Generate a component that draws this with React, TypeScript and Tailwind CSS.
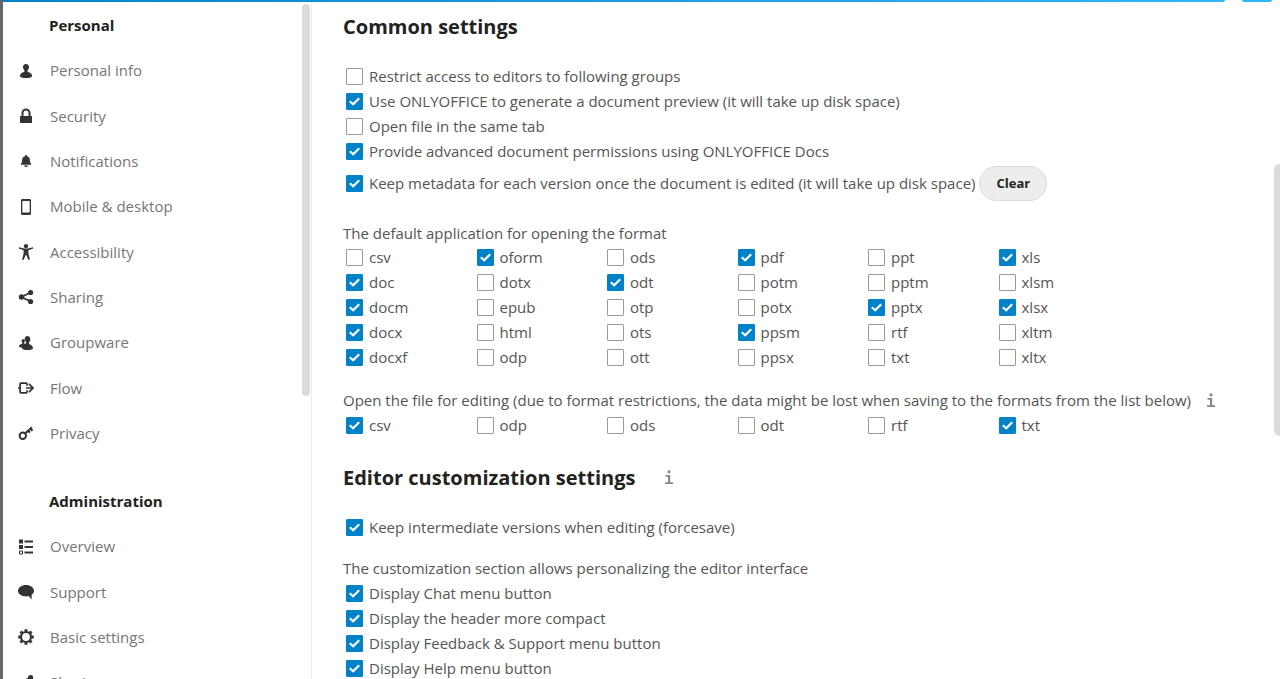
import React from "react";

type IconProps = { children: React.ReactNode };

function Icon({ children }: IconProps) {
  return (
    <svg
      xmlns="http://www.w3.org/2000/svg"
      viewBox="0 0 16 16"
      fill="currentColor"
      className="h-4 w-4 shrink-0 text-[#333]"
      aria-hidden="true"
    >
      {children}
    </svg>
  );
}

const shareIcon = (
  <Icon>
    <circle cx="12.600" cy="3.500" r="2.600" />
    <circle cx="3.500" cy="8" r="2.700" />
    <circle cx="12.600" cy="12.500" r="2.600" />
    <path d="M12.600 3.500 3.500 8l9.100 4.500" fill="none" stroke="currentColor" strokeWidth="1.800" />
  </Icon>
);

const personal = [
  {
    label: "Personal info",
    icon: (
      <Icon>
        <path d="M8 1C6.200 1 5 2.300 5 4c0 1.500.6 2.400 1.300 3.200.3.700.2 1.600-.3 1.900C4 9.700 2 10.700 2 12.600V13c0 1.400 2.500 2 6 2s6-.6 6-2v-.4c0-1.900-2-2.900-4-3.500-.5-.3-.6-1.200-.3-1.900C10.400 6.400 11 5.500 11 4c0-1.700-1.200-3-3-3z" />
      </Icon>
    ),
  },
  {
    label: "Security",
    icon: (
      <Icon>
        <path d="M8 .500A4.500 4.500 0 0 0 3.500 5v3H2v7h12V8h-1.500V5A4.500 4.500 0 0 0 8 .500zm0 2A2.500 2.500 0 0 1 10.500 5v3h-5V5A2.500 2.500 0 0 1 8 2.500z" />
      </Icon>
    ),
  },
  {
    label: "Notifications",
    icon: (
      <Icon>
        <path d="M8 2c-.6 0-1 .4-1 1v.3C5.200 3.700 4.200 5 4.200 6.800c0 2-.6 3.100-1.200 3.700v1.300h10v-1.300c-.6-.6-1.200-1.700-1.200-3.700C11.800 5 10.800 3.700 9 3.300V3c0-.6-.4-1-1-1zM6 12.500c.2.900 1 1.500 2 1.500s1.800-.6 2-1.500z" />
      </Icon>
    ),
  },
  {
    label: "Mobile & desktop",
    icon: (
      <Icon>
        <path
          fillRule="evenodd"
          d="M4.500 0C3.500 0 3 .6 3 1.500v13c0 .9.500 1.500 1.500 1.500h7c1 0 1.500-.6 1.500-1.500v-13c0-.9-.5-1.500-1.500-1.500zM4.300 2h7.400v11.500H4.300z"
        />
      </Icon>
    ),
  },
  {
    label: "Accessibility",
    icon: (
      <Icon>
        <circle cx="8" cy="2.200" r="2.100" />
        <path d="M.8 4.400 1 3.300 6 4.500h4l5-1.200.2 1.100-4.800 1.800v3.200l1.500 6.200-1.500.4L8.300 11h-.6L5.600 16l-1.500-.4 1.500-6.200V6.200z" />
      </Icon>
    ),
  },
  { label: "Sharing", icon: shareIcon },
  {
    label: "Groupware",
    icon: (
      <Icon>
        <path d="M9.500 1C7.800 1 6.700 2.200 6.700 3.800c0 1.400.6 2.200 1.200 2.900.2.700.2 1.500-.3 1.800-.3.100-.7.200-1 .4-.5-.3-.6-.8-.4-1.300.4-.4.700-.9.700-1.700C6.900 4.900 6.200 4.300 5.200 4.300s-1.700.6-1.700 1.600c0 .8.3 1.300.7 1.700.2.600.1 1.200-.3 1.400-1.500.3-2.900 1-2.900 2.200 0 .9 1.100 1.300 3 1.400v.400c0 1.400 2.200 2 5.500 2s5.500-.6 5.500-2c0-2-1.800-3.100-3.600-3.800-.5-.3-.5-1.100-.3-1.800.6-.7 1.200-1.500 1.200-2.900C12.300 2.200 11.200 1 9.500 1z" />
      </Icon>
    ),
  },
  {
    label: "Flow",
    icon: (
      <Icon>
        <g fill="none" stroke="currentColor" strokeWidth="1.700">
          <path d="M9 5.800V4c0-.6-.3-.9-.9-.9H3c-.6 0-.9.3-.9.900v8c0 .6.300.9.900.9h5.100c.6 0 .9-.3.900-.9v-1.800M0 8h2" />
          <path d="M8 8h6.500M11 3.800 15 8l-4 4.200" />
        </g>
      </Icon>
    ),
  },
  {
    label: "Privacy",
    icon: (
      <Icon>
        <path
          fill="none"
          stroke="currentColor"
          strokeWidth="2"
          d="M8 10.800a3.200 3.200 0 1 1-6.400 0 3.200 3.200 0 0 1 6.400 0zM7 8.600l7-6.400M10 5.500l2 2.200M12.300 3.300l2.200 2.400"
        />
      </Icon>
    ),
  },
];

const administration = [
  {
    label: "Overview",
    icon: (
      <Icon>
        <path d="M1 .500h4v4H1zM6.500 1.600H15v1.900H6.500zM1 6h4v4H1zM6.500 7H15v1.900H6.500zM6.500 12.500H15v1.900H6.500z" />
        <path fill="none" stroke="currentColor" d="M1.500 12h3v3h-3z" />
      </Icon>
    ),
  },
  {
    label: "Support",
    icon: (
      <Icon>
        <path d="M8 1C3.600 1 0 3.500 0 6.700s3.600 5.700 8 5.700c.9 0 1.700-.1 2.500-.3L13.700 15.500 13.600 10.800C15.100 9.800 16 8.300 16 6.700 16 3.500 12.400 1 8 1z" />
      </Icon>
    ),
  },
  {
    label: "Basic settings",
    icon: (
      <Icon>
        <circle cx="8" cy="8" r="5" fill="none" stroke="currentColor" strokeWidth="2.200" />
        <path
          stroke="currentColor"
          strokeWidth="3"
          d="M8 .2v2.500M8 13.300v2.500M.2 8h2.500M13.300 8h2.500M2.500 2.500l1.700 1.700M11.800 11.800l1.700 1.700M13.500 2.500l-1.700 1.700M4.200 11.800l-1.700 1.700"
        />
      </Icon>
    ),
  },
  { label: "Sharing", icon: shareIcon },
];

type NavItem = { label: string; icon: React.ReactNode };

function NavLink({ label, icon }: NavItem) {
  return (
    <li className="flex items-center">
      <a href="#" className="flex items-center gap-4 pl-[15px] text-[#767676]">
        {icon}
        {label}
      </a>
    </li>
  );
}

function Sidebar() {
  return (
    <nav className="flex w-[309px] shrink-0 justify-between border-r border-[#ededed]">
      <div className="grow">
        <h2 className="h-[46px] pl-[46px] leading-[46px] font-bold text-[#222]">Personal</h2>
        <ul className="grid min-h-[408px] auto-rows-fr">
          {personal.map((item) => (
            <NavLink key={item.label} {...item} />
          ))}
        </ul>
        <h2 className="mt-[22px] h-[46px] pl-[46px] leading-[46px] font-bold text-[#222]">
          Administration
        </h2>
        <ul className="grid min-h-[181px] auto-rows-fr">
          {administration.map((item) => (
            <NavLink key={item.label} {...item} />
          ))}
        </ul>
      </div>
      <div className="mt-0.5 mr-px h-[392px] w-2 rounded-full bg-[#dbdbdb]" />
    </nav>
  );
}

type CheckProps = { label: string; name: string; checked?: boolean };

function Check({ label, name, checked }: CheckProps) {
  return (
    <div className="flex h-[25px] items-center gap-1.5 pl-[3px]">
      <span className="grid h-[17px] w-[17px] shrink-0">
        <input
          id={name}
          type="checkbox"
          defaultChecked={checked}
          className="peer col-start-1 row-start-1 h-[17px] w-[17px] appearance-none rounded-[1px] border border-[#999] bg-white checked:border-[#0082c9] checked:bg-[#0082c9]"
        />
        <svg
          viewBox="0 0 17 17"
          className="pointer-events-none invisible col-start-1 row-start-1 h-[17px] w-[17px] peer-checked:visible"
          aria-hidden="true"
        >
          <path d="M3.800 8.200 7.200 11.200 13.200 5.300" fill="none" stroke="#fff" strokeWidth="2.200" />
        </svg>
      </span>
      <label htmlFor={name}>{label}</label>
    </div>
  );
}

function InfoIcon() {
  return (
    <svg viewBox="0 0 16 16" className="h-4 w-4 text-[#888]" fill="currentColor" role="img">
      <circle cx="8" cy="1.800" r="1.600" />
      <path d="M4.500 5h4.700v7.200H12V14H4v-1.800h3V6.800H4.500z" />
    </svg>
  );
}

const formats = [
  ["csv", "doc", "docm", "docx", "docxf"],
  ["oform", "dotx", "epub", "html", "odp"],
  ["ods", "odt", "otp", "ots", "ott"],
  ["pdf", "potm", "potx", "ppsm", "ppsx"],
  ["ppt", "pptm", "pptx", "rtf", "txt"],
  ["xls", "xlsm", "xlsx", "xltm", "xltx"],
];
const openByDefault = [
  "doc", "docm", "docx", "docxf", "oform", "odt", "pdf", "ppsm", "pptx", "xls", "xlsx",
];
const editable = ["csv", "odp", "ods", "odt", "rtf", "txt"];
const openForEditing = ["csv", "txt"];

function Settings() {
  return (
    <main className="min-w-0 grow pl-[31px]">
      <h2 className="pt-[9px] text-xl leading-8 font-bold text-[#222]">Common settings</h2>
      <div className="mt-[21px]">
        <Check name="groups" label="Restrict access to editors to following groups" />
        <Check
          name="preview"
          label="Use ONLYOFFICE to generate a document preview (it will take up disk space)"
          checked
        />
        <Check name="sameTab" label="Open file in the same tab" />
        <Check
          name="permissions"
          label="Provide advanced document permissions using ONLYOFFICE Docs"
          checked
        />
        <div className="mt-0.5 flex items-center gap-1">
          <Check
            name="metadata"
            label="Keep metadata for each version once the document is edited (it will take up disk space)"
            checked
          />
          <button className="h-[35px] rounded-full border border-[#dbdbdb] bg-[#ededed] px-4 text-[13px] font-bold text-[#222]">
            Clear
          </button>
        </div>
      </div>

      <p className="mt-5 leading-6">The default application for opening the format</p>
      <div className="grid max-w-[783px] grid-flow-col grid-cols-6 grid-rows-5">
        {formats.flat().map((format) => (
          <Check
            key={format}
            name={"def-" + format}
            label={format}
            checked={openByDefault.includes(format)}
          />
        ))}
      </div>

      <div className="mt-[18px] flex items-center gap-3">
        <p className="leading-[25px]">
          Open the file for editing (due to format restrictions, the data might be lost when saving
          to the formats from the list below)
        </p>
        <InfoIcon />
      </div>
      <div className="grid max-w-[783px] grid-cols-6">
        {editable.map((format) => (
          <Check
            key={format}
            name={"edit-" + format}
            label={format}
            checked={openForEditing.includes(format)}
          />
        ))}
      </div>

      <div className="mt-6 flex items-center gap-[26px]">
        <h2 className="text-xl leading-8 font-bold text-[#222]">Editor customization settings</h2>
        <InfoIcon />
      </div>
      <div className="mt-[21px]">
        <Check
          name="forcesave"
          label="Keep intermediate versions when editing (forcesave)"
          checked
        />
      </div>
      <p className="mt-4 leading-[25px]">
        The customization section allows personalizing the editor interface
      </p>
      <Check name="chat" label="Display Chat menu button" checked />
      <Check name="compact" label="Display the header more compact" checked />
      <Check name="feedback" label="Display Feedback & Support menu button" checked />
      <Check name="help" label="Display Help menu button" checked />
    </main>
  );
}

export default function App() {
  return (
    <div className="flex h-screen overflow-hidden bg-white font-['Open_Sans','Noto_Sans',sans-serif] text-[15px] text-[#555]">
      <div className="w-[3px] shrink-0 bg-[#666]" />
      <div className="flex min-w-0 grow flex-col">
        <div className="flex h-0.5 shrink-0 gap-[17px] pr-2">
          <div className="grow rounded-br-sm bg-linear-to-r from-[#0082c9] to-[#30b6ff]" />
          <div className="w-[30px] rounded-b-sm bg-[#30b6ff]" />
        </div>
        <div className="flex min-h-0 grow">
          <Sidebar />
          <Settings />
          <div className="mt-[162px] h-[272px] w-1.5 shrink-0 rounded-l-full bg-[#dbdbdb]" />
        </div>
      </div>
    </div>
  );
}
